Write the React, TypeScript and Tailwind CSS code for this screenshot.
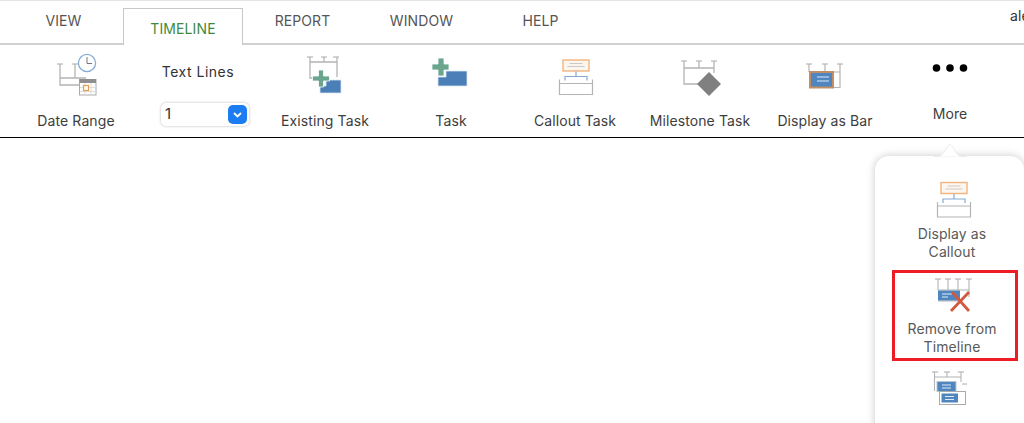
const gray = "#b4b4b4";
const blue = "#4a7fb8";

function Icon({ cx, top = 52, w = 70, h = 52, children }: { cx: number; top?: number; w?: number; h?: number; children: React.ReactNode }) {
  // viewBox is in page pixels so the strokes can be read straight off the picture
  return (
    <svg width={w} height={h} viewBox={`${cx - w / 2} ${top} ${w} ${h}`} className="block shrink-0">
      {children}
    </svg>
  );
}

function Ticks({ xs, y }: { xs: number[]; y: number }) {
  return (
    <>
      {xs.map((x) => (
        <path key={x} d={`M${x - 3} ${y}h6`} stroke="#a8a8a8" strokeWidth="1" fill="none" />
      ))}
    </>
  );
}

function CalloutGlyph({ x, y }: { x: number; y: number }) {
  return (
    <g transform={`translate(${x} ${y})`} fill="none">
      <rect x="4.5" y="0.5" width="26" height="11" fill="#fdf6ee" stroke="#f1b47e" strokeWidth="1.4" />
      <path d="M11 4h13M9 7h17" stroke="#c9c9c9" />
      <path d="M17.5 12v5M6.5 21v-4h22v4" stroke="#86a9d4" strokeWidth="1.2" />
      <path d="M1 20v15h33V20M1 24h33" stroke={gray} strokeWidth="1.2" />
    </g>
  );
}

function Tab({ label, active }: { label: string; active?: boolean }) {
  if (active) {
    return (
      <div className="relative z-10 flex h-[37px] w-[120px] items-start justify-center border-x border-t border-[#c8c8c8] bg-white pt-[11px] text-[14px] leading-[18px] text-[#3f8a3f]">
        {label}
      </div>
    );
  }
  return <div className="flex w-[119px] justify-center pt-[11px] text-[14px] leading-[18px] text-[#555]">{label}</div>;
}

function RibbonItem({ width, label, children }: { width: string; label: string; children: React.ReactNode }) {
  return (
    <div className={`flex flex-col items-center pt-[7px] ${width}`}>
      {children}
      <div className="mt-[7px] whitespace-nowrap text-[14px] leading-[20px] text-[#3d3d3d]">{label}</div>
    </div>
  );
}

function MenuItem({ lines, className, children }: { lines: string[]; className?: string; children: React.ReactNode }) {
  return (
    <div className={`flex flex-col items-center ${className ?? ""}`}>
      {children}
      <div className="mt-[5px] text-center text-[14px] leading-[18px] text-[#595959]">
        {lines.map((l) => (
          <div key={l}>{l}</div>
        ))}
      </div>
    </div>
  );
}

export default function App() {
  return (
    <div className="relative h-[423px] w-[1024px] overflow-hidden bg-white font-['Inter','Liberation_Sans',sans-serif] tracking-[0.1px]">
      {/* Tab strip */}
      <div className="flex h-[45px] items-end border-t border-b-2 border-t-[#e4e4e4] border-b-[#d0d0d0] pl-[4px]">
        <div className="flex h-full w-full items-start">
          <Tab label="VIEW" />
          <div className="mt-[7px]">
            <Tab label="TIMELINE" active />
          </div>
          <Tab label="REPORT" />
          <Tab label="WINDOW" />
          <Tab label="HELP" />
          <div className="ml-auto mt-[6px] w-[14px] overflow-hidden whitespace-nowrap text-[14px] leading-[18px] text-[#333]">alex</div>
        </div>
      </div>

      {/* Ribbon */}
      <div className="flex h-[93px] border-b border-black pl-[14px]">
        <RibbonItem width="w-[124px]" label="Date Range">
          <Icon cx={76}>
            <Ticks xs={[60, 75]} y={64} />
            <path d="M60 64v21h20M60 78h26M75 64v14" stroke={gray} strokeWidth="1.3" fill="none" />
            <circle cx="87" cy="63" r="8.6" fill="#fff" stroke="#86aed8" strokeWidth="1.3" />
            <path d="M87 57v6.5h5" stroke="#777" strokeWidth="1" fill="none" />
            <rect x="79.5" y="79.5" width="16.5" height="15.5" fill="#fff" stroke="#aaa" />
            <rect x="79.5" y="79" width="16.5" height="4" fill="#8f8f8f" />
            <path d="M85 83v12M91 83v12M80 87.5h16M80 91.5h16" stroke="#ddd" />
            <rect x="83.5" y="85.5" width="5" height="5" fill="#fff" stroke="#ee9a50" strokeWidth="1.2" />
          </Icon>
        </RibbonItem>

        <div className="flex w-[120px] flex-col items-center pt-[17px]">
          <div className="text-[14px] leading-[20px] tracking-[0.5px] text-[#333]">Text Lines</div>
          <div className="ml-[14px] mt-[21px] flex h-[23px] w-[88px] items-center justify-between rounded-[5px] bg-white pl-[4px] pr-[2px] text-[15px] text-[#333] shadow-[0_0_3px_rgba(0,0,0,0.28)]">
            <span>1</span>
            <span className="flex h-[19px] w-[19px] items-center justify-center rounded-[5px] bg-[#1c7cf2]">
              <svg width="11" height="8" viewBox="0 0 11 8">
                <path d="M2 2l3.5 3.5L9 2" stroke="#fff" strokeWidth="1.8" fill="none" />
              </svg>
            </span>
          </div>
        </div>

        <RibbonItem width="w-[134px]" label="Existing Task">
          <Icon cx={325}>
            <Ticks xs={[310, 324, 336]} y={57} />
            <path d="M310 57v21h6M310 62h27M324 57v5M337 57v20" stroke={gray} strokeWidth="1.3" fill="none" />
            <path d="M326 80h15v13h-21v-7h6z" fill={blue} stroke="#dbe6f2" strokeWidth="0.8" />
            <path d="M318.5 70h5v6h6v5h-6v6h-5v-6h-6v-5h6z" fill="#6aa58e" stroke="#fff" strokeWidth="0.8" />
          </Icon>
        </RibbonItem>

        <RibbonItem width="w-[118px]" label="Task">
          <Icon cx={451}>
            <path d="M446 71h21v15h-29v-9h8z" fill={blue} stroke="#dbe6f2" strokeWidth="0.8" />
            <path d="M438 58h6v6h5v6h-5v6h-6v-6h-6v-6h6z" fill="#6aa58e" stroke="#fff" strokeWidth="0.8" />
          </Icon>
        </RibbonItem>

        <RibbonItem width="w-[130px]" label="Callout Task">
          <Icon cx={575}>
            <CalloutGlyph x={558.5} y={59.5} />
          </Icon>
        </RibbonItem>

        <RibbonItem width="w-[120px]" label="Milestone Task">
          <Icon cx={700}>
            <Ticks xs={[684, 699, 714]} y={61} />
            <path d="M684 61v23h18M684 68h30M699 61v7M714 61v12" stroke={gray} strokeWidth="1.3" fill="none" />
            <path d="M709 72l12 12-12 12-12-12z" fill="#808080" />
          </Icon>
        </RibbonItem>

        <RibbonItem width="w-[130px]" label="Display as Bar">
          <Icon cx={825}>
            <Ticks xs={[809, 825, 840]} y={64} />
            <path d="M809 64v8M825 64v8M840 64v24M832 72h8M832 87.5h8" stroke={gray} strokeWidth="1.2" fill="none" />
            <rect x="810" y="72" width="23" height="15.5" fill="#4f86c0" stroke="#c08d66" strokeWidth="2" />
            <path d="M817 77h12M817 81h12" stroke="#dfeaf5" strokeWidth="1.2" />
          </Icon>
        </RibbonItem>

        <div className="flex w-[120px] flex-col items-center pt-[19px]">
          <svg width="36" height="8" viewBox="0 0 36 8" className="block">
            <circle cx="4.5" cy="4" r="3.8" fill="#000" />
            <circle cx="18" cy="4" r="3.8" fill="#000" />
            <circle cx="31.5" cy="4" r="3.8" fill="#000" />
          </svg>
          <div className="mt-[32px] text-[14px] leading-[20px] text-[#3d3d3d]">More</div>
        </div>
      </div>

      {/* More popover */}
      <div className="absolute left-[875px] top-[156px] h-[300px] w-[149px] rounded-t-[14px] bg-white shadow-[0_0_9px_rgba(0,0,0,0.22)]">
        <svg width="34" height="16" viewBox="0 0 34 16" className="absolute -top-[15px] left-[58px]">
          <path d="M0 16c8 0 11-3 14-10 1.500-3 4.500-3 6 0 3 7 6 10 14 10z" fill="#fff" stroke="#e4e4e4" strokeWidth="0.7" />
        </svg>
        <div className="flex flex-col items-center pl-[5px] pt-[23px]">
          <MenuItem lines={["Display as", "Callout"]}>
            <Icon cx={952} top={179} w={50} h={41}>
              <CalloutGlyph x={936.5} y={182} />
            </Icon>
          </MenuItem>
          <MenuItem lines={["Remove from", "Timeline"]} className="mt-[16px]">
            <Icon cx={952} top={277} w={50} h={38}>
              <Ticks xs={[938, 948, 958, 969]} y={279} />
              <path d="M938 279v11M948 279v11M958 279v11M969 279v18M938 290h31M938 301h24" stroke={gray} strokeWidth="1.1" fill="none" />
              <rect x="938" y="290.500" width="22" height="10" fill="#4f86c0" />
              <path d="M942 294h10M942 297h6" stroke="#dfeaf5" />
              <path d="M952 292l17 19M969 292l-18 19" stroke="#cf5a3e" strokeWidth="2.8" fill="none" />
            </Icon>
          </MenuItem>
          <div className="mt-[13px]">
            <Icon cx={952} top={369} w={50} h={40}>
              <Ticks xs={[935, 947, 961]} y={372} />
              <path d="M934.500 372v19M947 372v5M961 372v10M934 377h27" stroke={gray} strokeWidth="1.1" fill="none" />
              <path d="M962 384h5" stroke="#aaa" />
              <rect x="937" y="381.500" width="19" height="10" fill="#4f86c0" stroke="#bcc6d2" />
              <path d="M942 385h9M942 388h9" stroke="#dfeaf5" />
              <rect x="939.500" y="391.500" width="26" height="13" fill="#fff" stroke="#aaa" />
              <rect x="941.500" y="393.500" width="16.500" height="9" fill="#4f86c0" />
              <path d="M945 396.500h9M945 399.500h9" stroke="#dfeaf5" />
            </Icon>
          </div>
        </div>
      </div>

      {/* Red annotation box */}
      <div className="absolute left-[892px] top-[270px] h-[91px] w-[126px] border-[3px] border-[#ee1c25]" />
    </div>
  );
}
